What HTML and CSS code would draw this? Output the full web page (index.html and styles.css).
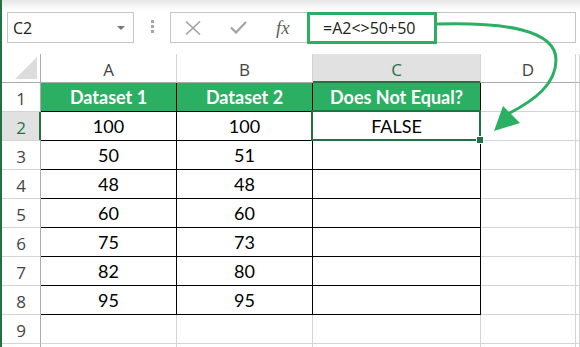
FILE: index.html
```html
<!DOCTYPE html>
<html lang="en">
<head>
    <meta charset="UTF-8">
    <meta name="viewport" content="width=device-width, initial-scale=1.0">
    <title>Does Not Equal</title>
    <link rel="stylesheet" href="styles.css">
</head>
<body>
    <div class="app">
        <div class="fbar">
            <div class="namebox">
                <span>C2</span>
                <span class="caret"></span>
            </div>
            <div class="grip"><i></i><i></i><i></i></div>
            <div class="formula">
                <div class="fbtns">
                    <svg class="ico" width="16" height="14" viewBox="0 0 16 14">
                        <path d="M1 0.5 L15 13.5 M15 0.5 L1 13.5" stroke="#a3a3a3" stroke-width="1.6" fill="none"/>
                    </svg>
                    <svg class="ico" width="17" height="13" viewBox="0 0 17 13">
                        <path d="M1 6.5 L6 11.5 L16 1" stroke="#a3a3a3" stroke-width="2.2" fill="none"/>
                    </svg>
                    <span class="fx">fx</span>
                </div>
                <div class="finput">=A2&lt;&gt;50+50</div>
            </div>
        </div>

        <div class="sheet">
            <!-- column headers -->
            <div class="hd corner"><span class="tri"></span></div>
            <div class="hd">A</div>
            <div class="hd">B</div>
            <div class="hd sel">C</div>
            <div class="hd">D</div>
            <div class="hd"></div>

            <!-- row 1 -->
            <div class="rh">1</div>
            <div class="c b top">Dataset 1</div>
            <div class="c b top">Dataset 2</div>
            <div class="c b top">Does Not Equal?</div>
            <div class="c"></div>
            <div class="c"></div>

            <div class="rh sel">2</div>
            <div class="c b">100</div>
            <div class="c b">100</div>
            <div class="c b active">FALSE</div>
            <div class="c"></div>
            <div class="c"></div>

            <div class="rh">3</div>
            <div class="c b">50</div>
            <div class="c b">51</div>
            <div class="c b"></div>
            <div class="c"></div>
            <div class="c"></div>

            <div class="rh">4</div>
            <div class="c b">48</div>
            <div class="c b">48</div>
            <div class="c b"></div>
            <div class="c"></div>
            <div class="c"></div>

            <div class="rh">5</div>
            <div class="c b">60</div>
            <div class="c b">60</div>
            <div class="c b"></div>
            <div class="c"></div>
            <div class="c"></div>

            <div class="rh">6</div>
            <div class="c b">75</div>
            <div class="c b">73</div>
            <div class="c b"></div>
            <div class="c"></div>
            <div class="c"></div>

            <div class="rh">7</div>
            <div class="c b">82</div>
            <div class="c b">80</div>
            <div class="c b"></div>
            <div class="c"></div>
            <div class="c"></div>

            <div class="rh">8</div>
            <div class="c b">95</div>
            <div class="c b">95</div>
            <div class="c b"></div>
            <div class="c"></div>
            <div class="c"></div>

            <div class="rh">9</div>
            <div class="c"></div>
            <div class="c"></div>
            <div class="c"></div>
            <div class="c"></div>
            <div class="c"></div>

            <div class="rh"></div>
            <div class="c"></div>
            <div class="c"></div>
            <div class="c"></div>
            <div class="c"></div>
            <div class="c"></div>
        </div>

        <!-- callout over the formula -->
        <div class="callout"></div>
        <svg class="arrow" width="580" height="347" viewBox="0 0 580 347">
            <path d="M437 24 C505 22 556 30 556 60 C556 84 535 100 508 114" stroke="#2aaf63" stroke-width="3" fill="none"/>
            <polygon points="494,131 503,106 520,123" fill="#2aaf63"/>
        </svg>
    </div>
</body>
</html>
```

FILE: styles.css
```css
* {
    box-sizing: border-box;
}
body {
    margin: 0;
    background: #fff;
    font-family: "Open Sans", "Noto Sans", sans-serif;
}
.app {
    position: relative;
    width: 580px;
    height: 347px;
    overflow: hidden;
    border-left: 2px solid #217346;
}

/* formula bar */
.fbar {
    height: 54px;
    display: flex;
    align-items: flex-start;
    padding-top: 12px;
    background: linear-gradient(#e6e6e6 0px, #fbfbfb 9px, #fff 12px);
}
.namebox {
    margin-left: 5px;
    width: 127px;
    height: 31px;
    border: 1px solid #c6c6c6;
    background: #fff;
    display: flex;
    align-items: center;
    justify-content: space-between;
    padding: 0 8px 0 5px;
    font-size: 16px;
    color: #222;
}
.caret {
    width: 0;
    height: 0;
    border-left: 4px solid transparent;
    border-right: 4px solid transparent;
    border-top: 4px solid #777;
}
.grip {
    margin-left: 17px;
    padding-top: 8px;
    display: flex;
    flex-direction: column;
    gap: 2px;
}
.grip i {
    display: block;
    width: 3px;
    height: 3px;
    background: #a6a6a6;
}
.formula {
    margin-left: 16px;
    width: 406px;
    height: 31px;
    border: 1px solid #c6c6c6;
    background: #fff;
    display: flex;
    align-items: center;
}
.fbtns {
    display: flex;
    align-items: center;
    gap: 29px;
    padding-left: 14px;
    width: 140px;
}
.fx {
    font-family: "Liberation Serif", "DejaVu Serif", serif;
    font-style: italic;
    font-size: 19px;
    color: #5f5f5f;
}
.finput {
    font-size: 16px;
    color: #222;
    padding-left: 12px;
}

/* sheet grid */
.sheet {
    display: grid;
    grid-template-columns: 39px 136px 136px 168px 95px 1fr;
    grid-auto-rows: 29px;
    font-family: "Lato", "Open Sans", sans-serif;
    font-size: 18px;
}
.hd, .rh, .c {
    border-right: 1px solid #d4d4d4;
    border-bottom: 1px solid #d4d4d4;
    display: flex;
    align-items: flex-end;
    justify-content: center;
    padding-bottom: 3px;
}
.hd {
    border-bottom-color: #ababab;
    font-family: "Open Sans", "Noto Sans", sans-serif;
    font-size: 17px;
    color: #444;
    padding-bottom: 1px;
}
.hd.sel {
    background: #e1e1e1;
    color: #217346;
    border-bottom: 1px solid #217346;
    box-shadow: inset 0 -1px 0 #217346;
}
.corner {
    position: relative;
    border-right-color: #ababab;
}
.tri {
    position: absolute;
    right: 3px;
    bottom: 3px;
    width: 0;
    height: 0;
    border-left: 22px solid transparent;
    border-bottom: 22px solid #dcdcdc;
}
.rh {
    border-right-color: #ababab;
    font-family: "Open Sans", "Noto Sans", sans-serif;
    font-size: 17px;
    color: #444;
    padding-bottom: 1px;
}
.rh.sel {
    background: #e1e1e1;
    color: #217346;
    border-right-color: #217346;
    box-shadow: inset -1px 0 0 #217346;
}
.c {
    color: #000;
}
.c.b {
    border-right-color: #000;
    border-bottom-color: #000;
}
.c.top {
    background: #2aaf63;
    color: #fff;
    font-weight: bold;
}
.active {
    position: relative;
}
.active::after {
    content: "";
    position: absolute;
    top: -2px;
    left: -2px;
    right: -1px;
    bottom: -1px;
    border: 2px solid #217346;
}
.active::before {
    content: "";
    position: absolute;
    right: -4px;
    bottom: -4px;
    width: 6px;
    height: 6px;
    background: #217346;
    border: 1px solid #fff;
    z-index: 1;
}

/* overlays */
.callout {
    position: absolute;
    left: 305px;
    top: 12px;
    width: 130px;
    height: 32px;
    border: 3px solid #2aaf63;
}
.arrow {
    position: absolute;
    left: -2px;
    top: 0;
    pointer-events: none;
}
```
